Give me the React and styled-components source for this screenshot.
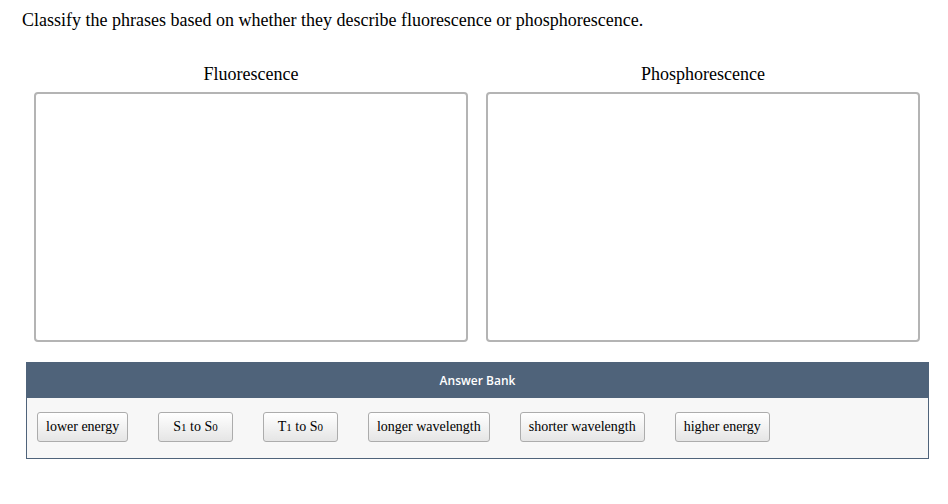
import styled, { createGlobalStyle } from 'styled-components'

const GlobalStyle = createGlobalStyle`
    body {
        margin: 0;
        background: #fff;
        font-family: "Liberation Serif", "Times New Roman", serif;
        color: #000;
    }
`

const Page = styled.div`
    width: 948px;
    height: 504px;
    padding: 9px 0 0 22px;
    box-sizing: border-box;
`

const Prompt = styled.p`
    margin: 0;
    font-size: 18px;
    line-height: 22px;
`

const Zones = styled.div`
    display: grid;
    grid-template-columns: 434px 434px;
    column-gap: 18px;
    margin: 32px 0 0 12px;
`

const Zone = styled.div`
    display: flex;
    flex-direction: column;
    align-items: center;
`

const ZoneLabel = styled.div`
    font-size: 18px;
    line-height: 22px;
    height: 29px;
`

const DropArea = styled.div`
    width: 100%;
    height: 250px;
    box-sizing: border-box;
    border: 2px solid #b4b4b4;
    border-radius: 4px;
    background: #fff;
`

const Bank = styled.div`
    width: 903px;
    margin: 20px 0 0 4px;
    border: 1px solid #4f637a;
    box-sizing: border-box;
`

const BankHeader = styled.div`
    height: 35px;
    background: #4f637a;
    color: #fff;
    font-family: "Open Sans", "Liberation Sans", sans-serif;
    font-weight: 600;
    font-size: 12px;
    display: flex;
    align-items: center;
    justify-content: center;
`

const BankBody = styled.div`
    background: #f7f7f7;
    display: flex;
    gap: 30px;
    padding: 14px 10px 0;
    height: 60px;
    box-sizing: border-box;
`

const Chip = styled.div`
    height: 30px;
    box-sizing: border-box;
    padding: 0 ${p => (p.$wide ? 14 : 8)}px;
    border: 1px solid #acacac;
    border-radius: 3px;
    background: linear-gradient(#ffffff, #e5e5e5);
    font-size: 14px;
    display: flex;
    align-items: center;
    white-space: nowrap;
`

const Sub = styled.sub`
    font-size: 11px;
    vertical-align: -3px;
    line-height: 0;
`

const Phrase = ({ letter }) => (
    <>
        {letter}<Sub>1</Sub>&nbsp;to S<Sub>0</Sub>
    </>
)

export default function App() {
    return (
        <Page>
            <GlobalStyle />
            <Prompt>Classify the phrases based on whether they describe fluorescence or phosphorescence.</Prompt>
            <Zones>
                <Zone>
                    <ZoneLabel>Fluorescence</ZoneLabel>
                    <DropArea />
                </Zone>
                <Zone>
                    <ZoneLabel>Phosphorescence</ZoneLabel>
                    <DropArea />
                </Zone>
            </Zones>
            <Bank>
                <BankHeader>Answer Bank</BankHeader>
                <BankBody>
                    <Chip>lower energy</Chip>
                    <Chip $wide><Phrase letter="S" /></Chip>
                    <Chip $wide><Phrase letter="T" /></Chip>
                    <Chip>longer wavelength</Chip>
                    <Chip>shorter wavelength</Chip>
                    <Chip>higher energy</Chip>
                </BankBody>
            </Bank>
        </Page>
    )
}
